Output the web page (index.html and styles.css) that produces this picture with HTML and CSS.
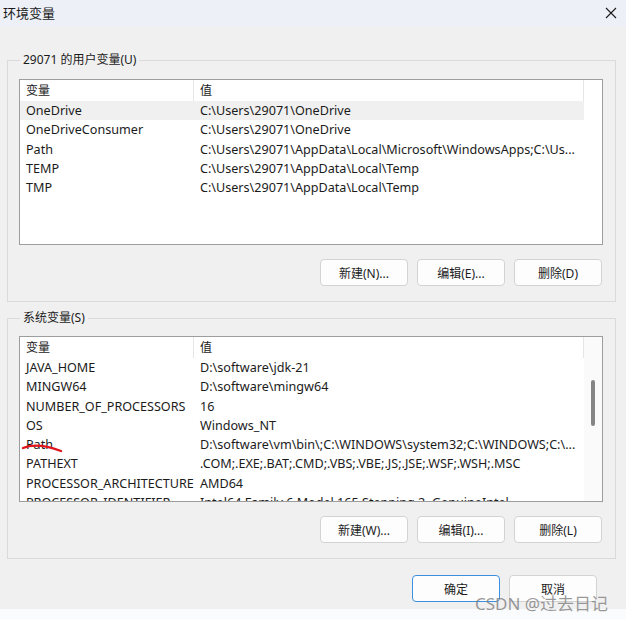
FILE: index.html
```html
<!DOCTYPE html>
<html lang="zh-CN">
<head>
    <meta charset="UTF-8">
    <meta name="viewport" content="width=device-width, initial-scale=1.0">
    <title>环境变量</title>
    <link rel="stylesheet" href="styles.css">
</head>
<body>
    <div class="window">
        <div class="titlebar">
            <span class="title">环境变量</span>
            <svg class="close-icon" width="12" height="12" viewBox="0 0 12 12">
                <path d="M1 1 L11 11 M11 1 L1 11" stroke="#1a1a1a" stroke-width="1.1" fill="none"/>
            </svg>
        </div>

        <div class="dialog">
            <!-- user variables -->
            <fieldset class="group group-user">
                <legend>29071 的用户变量(U)</legend>
                <div class="listbox">
                    <div class="list-main">
                        <div class="list-head">
                            <span class="cell name">变量</span>
                            <span class="cell value">值</span>
                        </div>
                        <div class="row selected"><span class="cell name">OneDrive</span><span class="cell value">C:\Users\29071\OneDrive</span></div>
                        <div class="row"><span class="cell name">OneDriveConsumer</span><span class="cell value">C:\Users\29071\OneDrive</span></div>
                        <div class="row"><span class="cell name">Path</span><span class="cell value">C:\Users\29071\AppData\Local\Microsoft\WindowsApps;C:\Us...</span></div>
                        <div class="row"><span class="cell name">TEMP</span><span class="cell value">C:\Users\29071\AppData\Local\Temp</span></div>
                        <div class="row"><span class="cell name">TMP</span><span class="cell value">C:\Users\29071\AppData\Local\Temp</span></div>
                    </div>
                    <div class="scroll-area"></div>
                </div>
                <div class="button-row">
                    <button class="btn">新建(N)...</button>
                    <button class="btn">编辑(E)...</button>
                    <button class="btn">删除(D)</button>
                </div>
            </fieldset>

            <!-- system variables -->
            <fieldset class="group group-system">
                <legend>系统变量(S)</legend>
                <div class="listbox">
                    <div class="list-main">
                        <div class="list-head">
                            <span class="cell name">变量</span>
                            <span class="cell value">值</span>
                        </div>
                        <div class="row"><span class="cell name">JAVA_HOME</span><span class="cell value">D:\software\jdk-21</span></div>
                        <div class="row"><span class="cell name">MINGW64</span><span class="cell value">D:\software\mingw64</span></div>
                        <div class="row"><span class="cell name">NUMBER_OF_PROCESSORS</span><span class="cell value">16</span></div>
                        <div class="row"><span class="cell name">OS</span><span class="cell value">Windows_NT</span></div>
                        <div class="row mark-row">
                            <span class="cell name">Path</span><span class="cell value">D:\software\vm\bin\;C:\WINDOWS\system32;C:\WINDOWS;C:\...</span>
                            <svg class="red-mark" width="46" height="14" viewBox="0 0 46 14">
                                <path d="M3 8 Q 17 2 41 11" stroke="#e0141b" stroke-width="2.4" stroke-linecap="round" fill="none"/>
                            </svg>
                        </div>
                        <div class="row"><span class="cell name">PATHEXT</span><span class="cell value">.COM;.EXE;.BAT;.CMD;.VBS;.VBE;.JS;.JSE;.WSF;.WSH;.MSC</span></div>
                        <div class="row"><span class="cell name">PROCESSOR_ARCHITECTURE</span><span class="cell value">AMD64</span></div>
                        <div class="row"><span class="cell name">PROCESSOR_IDENTIFIER</span><span class="cell value">Intel64 Family 6 Model 165 Stepping 2, GenuineIntel</span></div>
                    </div>
                    <div class="scroll-area scrollbar">
                        <div class="thumb"></div>
                    </div>
                </div>
                <div class="button-row">
                    <button class="btn">新建(W)...</button>
                    <button class="btn">编辑(I)...</button>
                    <button class="btn">删除(L)</button>
                </div>
            </fieldset>

            <div class="footer-buttons">
                <button class="btn btn-default">确定</button>
                <button class="btn">取消</button>
            </div>
        </div>

        <div class="bottom-strip"></div>
        <div class="watermark">CSDN @过去日记</div>
    </div>
</body>
</html>
```

FILE: styles.css
```css
:root {
    --bg: #f0f0f0;
    --text: #1b1b1b;
    --group-border: #dadada;
    --list-border: #9d9d9d;
}

* {
    box-sizing: border-box;
}

body {
    margin: 0;
    background: var(--bg);
    font-family: "Segoe UI", "Noto Sans", "Noto Sans CJK SC", sans-serif;
    font-size: 12px;
    color: var(--text);
}

.window {
    position: relative;
    width: 626px;
    height: 619px;
    overflow: hidden;
    display: flex;
    flex-direction: column;
}

.titlebar {
    height: 27px;
    background: #edf1f7;
    display: flex;
    align-items: center;
    justify-content: space-between;
    padding: 0 9px 2px 3px;
}

.title {
    font-size: 13px;
}

.dialog {
    flex: 1;
    padding: 25px 10px 0 7px;
    display: flex;
    flex-direction: column;
}

.group {
    margin: 0;
    min-width: 0;
    border: 1px solid var(--group-border);
    padding: 11px 12px 15px 11px;
}

.group legend {
    padding: 0 3px;
    margin-left: 1px;
    font-size: 12px;
    line-height: 16px;
}

.group-system {
    margin-top: 8px;
    padding-top: 10px;
}

.listbox {
    height: 166px;
    border: 1px solid var(--list-border);
    background: #fff;
    display: flex;
    overflow: hidden;
}

.list-main {
    width: 564px;
    overflow: hidden;
}

.list-head,
.row {
    display: grid;
    grid-template-columns: 174px 1fr;
    white-space: nowrap;
}

.list-head {
    height: 21px;
    line-height: 21px;
    border-right: 1px solid #e6e6e6;
}

.list-head .name {
    border-right: 1px solid #e6e6e6;
}

.row {
    height: 19.3px;
    line-height: 19px;
    font-size: 12.6px;
}

.row.selected {
    background: #f0f0f0;
}

.cell {
    padding-left: 6px;
    overflow: hidden;
}

.mark-row {
    position: relative;
}

.red-mark {
    position: absolute;
    left: 0;
    top: 5px;
}

.scroll-area {
    flex: 1;
}

.scrollbar {
    background: #fafafa;
    position: relative;
}

.thumb {
    position: absolute;
    left: 7px;
    top: 43px;
    width: 4px;
    height: 46px;
    border-radius: 2px;
    background: #858585;
}

.button-row {
    display: flex;
    justify-content: flex-end;
    gap: 9px;
    margin-top: 14px;
    padding-right: 1px;
}

.btn {
    width: 88px;
    height: 27px;
    border: 1px solid #d3d3d3;
    border-radius: 4px;
    background: #fdfdfd;
    font-family: inherit;
    font-size: 12px;
    color: var(--text);
    padding: 0;
}

.footer-buttons {
    display: flex;
    justify-content: flex-end;
    gap: 9px;
    margin-top: 16px;
    padding-right: 19px;
}

.btn-default {
    border-color: #3d8fe0;
}

.bottom-strip {
    height: 10px;
    background: #fafbfc;
}

.watermark {
    position: absolute;
    left: 475px;
    top: 590px;
    font-size: 17px;
    color: rgba(120, 120, 120, 0.75);
    white-space: nowrap;
}
```
